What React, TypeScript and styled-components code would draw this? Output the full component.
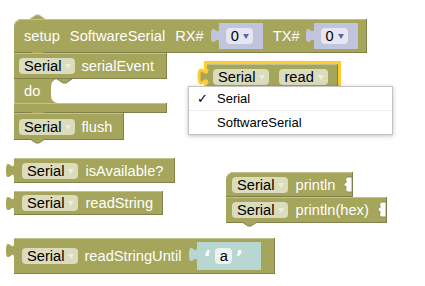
import styled, { createGlobalStyle, css } from 'styled-components';

const OLIVE = '#a5a55b';
const OLIVE_DARK = '#80804a';
const OLIVE_LIGHT = '#c2c290';
const OLIVE_FIELD = '#dbdbbd';
const LAVENDER = '#c0c4dd';
const LAVENDER_FIELD = '#e4e6f1';
const TEAL = '#b8d7d2';
const TEAL_FIELD = '#ecf3f1';

const GlobalStyle = createGlobalStyle`
  html, body { margin: 0; padding: 0; background: #fff; }
  body { font-family: "Liberation Sans", Arial, sans-serif; }
`;

const Workspace = styled.div`
  position: relative;
  width: 425px;
  height: 286px;
  overflow: hidden;
  background: #fff;
`;

// blocks sit at free positions on the canvas
const Placed = styled.div<{ $x: number; $y: number }>`
  position: absolute;
  left: ${p => p.$x}px;
  top: ${p => p.$y}px;
  display: flex;
  flex-direction: column;
`;

const Body = styled.div<{ $w: number; $h: number; $round?: boolean; $pl?: number; $gap?: number; $selected?: boolean }>`
  position: relative;
  box-sizing: border-box;
  width: ${p => p.$w}px;
  height: ${p => p.$h}px;
  display: flex;
  align-items: center;
  gap: ${p => p.$gap ?? 10}px;
  padding-left: ${p => p.$pl ?? 10}px;
  background: ${OLIVE};
  color: #fff;
  font-size: 14.67px;
  white-space: nowrap;
  border-top-left-radius: ${p => (p.$round ? '8px' : '0')};
  box-shadow: inset 0 -1px 0 ${OLIVE_DARK}, inset -1px 0 0 ${OLIVE_DARK}, inset 0 1px 0 ${OLIVE_LIGHT};
  ${p => p.$selected && css`
    outline: 3px solid #fc3;
    outline-offset: 0;
  `}
`;

const Field = styled.span<{ $bg: string }>`
  display: inline-flex;
  align-items: center;
  gap: 4px;
  height: 16px;
  padding: 0 4px 0 5px;
  border-radius: 4px;
  background: ${p => p.$bg};
  color: #000;
  font-size: 14.67px;
  line-height: 16px;
`;

const Arrow = styled.span<{ $c: string }>`
  width: 0;
  height: 0;
  margin-top: 1px;
  border-left: 3.5px solid transparent;
  border-right: 3.5px solid transparent;
  border-top: 5px solid ${p => p.$c};
`;

const Socket = styled.div<{ $bg: string; $w: number; $h: number; $ml?: number; $pl?: number }>`
  position: relative;
  box-sizing: border-box;
  width: ${p => p.$w}px;
  height: ${p => p.$h}px;
  margin-left: ${p => p.$ml ?? 5}px;
  padding-left: ${p => p.$pl ?? 7}px;
  display: flex;
  align-items: center;
  gap: 4px;
  background: ${p => p.$bg};
`;

const Quote = styled.span`
  color: #fff;
  font-family: "DejaVu Sans", sans-serif;
  font-size: 19px;
  font-weight: bold;
  line-height: 1;
  margin-top: 3px;
`;

const TabSvg = styled.svg`
  position: absolute;
  left: -9px;
  top: 4px;
  overflow: visible;
`;

const HoleSvg = styled.svg`
  position: absolute;
  right: 1px;
  top: 5px;
  overflow: visible;
`;

const NotchSvg = styled.svg<{ $top?: boolean }>`
  position: absolute;
  left: 16px;
  ${p => (p.$top ? 'top: -5px;' : 'bottom: -4px;')}
  overflow: visible;
`;

const SlotNotch = styled.svg`
  position: absolute;
  left: 6px;
  top: 0;
`;

const DoRow = styled.div`
  display: flex;
  width: 153px;
  height: 24px;
  background: linear-gradient(to right, ${OLIVE} 0 50px, transparent 50px);
`;

const DoArm = styled.div`
  width: 37px;
  box-sizing: border-box;
  padding-left: 10px;
  display: flex;
  align-items: center;
  color: #fff;
  font-size: 14.67px;
  box-shadow: inset 1px 0 0 ${OLIVE_LIGHT};
`;

const Slot = styled.div`
  position: relative;
  flex: 1;
  background: #fff;
  border-radius: 7px 0 0 7px;
`;

const Menu = styled.div`
  position: absolute;
  left: 188px;
  top: 86px;
  width: 205px;
  box-sizing: border-box;
  background: #fff;
  border: 1px solid #c4c4c4;
  box-shadow: 0 1px 4px rgba(0, 0, 0, 0.25);
  font-size: 13px;
  color: #000;
`;

const MenuItem = styled.div<{ $sep?: boolean }>`
  position: relative;
  height: 23px;
  display: flex;
  align-items: center;
  padding-left: 28px;
  ${p => p.$sep && css`border-bottom: 1px dotted #e0e0e0;`}
`;

const Check = styled.span`
  position: absolute;
  left: 8px;
  font-family: "DejaVu Sans", sans-serif;
  font-size: 13px;
`;

const Tab = ({ color, stroke }: { color: string; stroke?: string }) => (
  <TabSvg width="9" height="17" viewBox="-1 -1 9 17">
    <path d="M8,0 C8,10 0,-8 0,7.5 S8,5 8,15" fill={color} stroke={stroke || 'none'} strokeWidth={stroke ? 3 : 0} />
  </TabSvg>
);

// external value input: a puzzle hole cut into the right edge
const Hole = () => (
  <HoleSvg width="8" height="15" viewBox="0 0 8 15">
    <path d="M8,0 L5,0 C2,0 1,2 2,4 C3,6 0,6 0,7.5 C0,9 3,9 2,11 C1,13 2,15 5,15 L8,15 Z" fill="#fff" stroke={OLIVE_DARK} strokeWidth="0.8" />
  </HoleSvg>
);

const NextNotch = () => (
  <NotchSvg width="15" height="5" viewBox="0 0 15 5">
    <path d="M0,0 L6,4 L9,4 L15,0" fill={OLIVE} stroke={OLIVE_DARK} strokeWidth="1" />
  </NotchSvg>
);

const TopNotch = () => (
  <NotchSvg $top width="15" height="5" viewBox="0 0 15 5">
    <path d="M0,5 L6,1 L9,1 L15,5" fill={OLIVE} stroke={OLIVE_LIGHT} strokeWidth="1" />
  </NotchSvg>
);

const SerialField = () => (
  <Field $bg={OLIVE_FIELD}>Serial<Arrow $c="#eeeed8" /></Field>
);

const NumberSocket = ({ ml }: { ml?: number }) => (
  <Socket $bg={LAVENDER} $w={44} $h={26} $ml={ml}>
    <Tab color={LAVENDER} />
    <Field $bg={LAVENDER_FIELD}>0<Arrow $c="#5b67a5" /></Field>
  </Socket>
);

export default function App() {
  return (
    <Workspace>
      <GlobalStyle />

      <Placed $x={14} $y={19}>
        <Body $w={353} $h={34} $round>
          <TopNotch />
          <span>setup</span>
          <span>SoftwareSerial</span>
          <span>RX#</span>
          <NumberSocket />
          <span>TX#</span>
          <NumberSocket ml={4} />
          <NextNotch />
        </Body>
      </Placed>

      <Placed $x={14} $y={53}>
        <Body $w={153} $h={26} $pl={5} $gap={6}>
          <SerialField />
          <span>serialEvent</span>
        </Body>
        <DoRow>
          <DoArm>do</DoArm>
          <Slot>
            <SlotNotch width="15" height="5" viewBox="0 0 15 5">
              <path d="M0,0 L6,4 L9,4 L15,0" fill={OLIVE} stroke={OLIVE_DARK} strokeWidth="1" />
            </SlotNotch>
          </Slot>
        </DoRow>
        <Body $w={153} $h={10}>
          <NextNotch />
        </Body>
      </Placed>

      <Placed $x={14} $y={113}>
        <Body $w={110} $h={27} $pl={5} $gap={6}>
          <SerialField />
          <span>flush</span>
          <NextNotch />
        </Body>
      </Placed>

      <Placed $x={207} $y={64}>
        <Body $w={131} $h={26} $pl={6} $gap={10} $selected>
          <Tab color={OLIVE} stroke="#fc3" />
          <SerialField />
          <Field $bg={OLIVE_FIELD}>read<Arrow $c="#eeeed8" /></Field>
        </Body>
      </Placed>

      <Menu>
        <MenuItem $sep><Check>✓</Check>Serial</MenuItem>
        <MenuItem>SoftwareSerial</MenuItem>
      </Menu>

      <Placed $x={14} $y={158}>
        <Body $w={161} $h={25} $pl={8} $gap={7}>
          <Tab color={OLIVE} />
          <SerialField />
          <span>isAvailable?</span>
        </Body>
      </Placed>

      <Placed $x={14} $y={191}>
        <Body $w={149} $h={24} $pl={8} $gap={7}>
          <Tab color={OLIVE} />
          <SerialField />
          <span>readString</span>
        </Body>
      </Placed>

      <Placed $x={226} $y={172}>
        <Body $w={127} $h={25} $pl={6} $gap={7} $round>
          <SerialField />
          <span>println</span>
          <Hole />
        </Body>
        <Body $w={161} $h={26} $pl={6} $gap={7}>
          <SerialField />
          <span>println(hex)</span>
          <Hole />
          <NextNotch />
        </Body>
      </Placed>

      <Placed $x={14} $y={238}>
        <Body $w={261} $h={36} $pl={8} $gap={6}>
          <Tab color={OLIVE} />
          <SerialField />
          <span>readStringUntil</span>
          <Socket $bg={TEAL} $w={64} $h={28} $ml={10} $pl={6}>
            <Tab color={TEAL} />
            <Quote>‘</Quote>
            <Field $bg={TEAL_FIELD}>a</Field>
            <Quote>’</Quote>
          </Socket>
        </Body>
      </Placed>
    </Workspace>
  );
}
